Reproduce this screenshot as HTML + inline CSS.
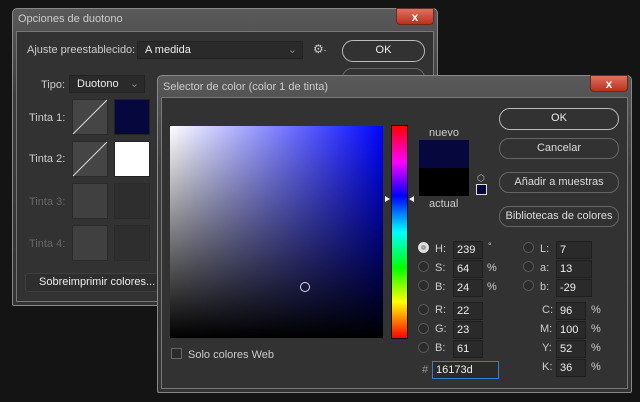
<!DOCTYPE html>
<html><head><meta charset="utf-8"><style>
*{box-sizing:border-box;margin:0;padding:0}
body{width:640px;height:402px;background:#141414;position:relative;overflow:hidden;font-family:"Liberation Sans",sans-serif;font-size:11px;color:#ddd}
.a{position:absolute}
.frame{background:linear-gradient(180deg,#5a5a5a,#3c3c3c 30%,#333);border:1px solid #888;border-radius:5px 5px 2px 2px}
.inner{background:#323232;border:1px solid #777}
.close{background:linear-gradient(#e07060,#b8321f);border:1px solid #6a2a20;border-radius:0 0 4px 4px;color:#fff;text-align:center;font-weight:bold;font-size:12px;line-height:16px}
.btn{border:1.5px solid #bbb;border-radius:11px;text-align:center;color:#eee;line-height:18px}
.btn2{border:1px solid #666;border-radius:10px;text-align:center;color:#ddd;line-height:18px}
.sel{background:#2a2a2a;border:1px solid #222;color:#eee;padding-left:7px;line-height:16px}
.sw{background:#454545;border:1px solid #2a2a2a}
.inp{background:#2a2a2a;border:1px solid #1e1e1e;color:#eee;padding-left:3px;line-height:16px;height:18px}
.rad{width:11px;height:11px;border-radius:50%;border:1px solid #555;background:#2b2b2b}
.lbl{color:#ccc}
.dim{color:#666}
</style></head><body>
<!-- dialog 1 -->
<div class="a frame" style="left:12px;top:8px;width:426px;height:298px"></div>
<div class="a" style="left:18px;top:13px;color:#ccc;font-size:11px">Opciones de duotono</div>
<div class="a close" style="left:396px;top:8px;width:38px;height:17px">x</div>
<div class="a inner" style="left:16px;top:31px;width:418px;height:271px"></div>
<div class="a lbl" style="left:27px;top:44px">Ajuste preestablecido:</div>
<div class="a sel" style="left:137px;top:41px;width:166px;height:18px">A medida<span style="position:absolute;right:5px;color:#888">⌄</span></div>
<div class="a" style="left:313px;top:42px;color:#ccc;font-size:12px">⚙<span style="font-size:8px">-</span></div>
<div class="a btn" style="left:342px;top:40px;width:83px;height:22px">OK</div>
<div class="a btn2" style="left:342px;top:68px;width:83px;height:20px"></div>
<div class="a lbl" style="left:41px;top:79px">Tipo:</div>
<div class="a sel" style="left:69px;top:75px;width:76px;height:18px">Duotono<span style="position:absolute;right:5px;color:#888">⌄</span></div>
<div class="a lbl" style="left:29px;top:112px">Tinta 1:</div>
<div class="a lbl" style="left:29px;top:153px">Tinta 2:</div>
<div class="a dim" style="left:29px;top:196px">Tinta 3:</div>
<div class="a dim" style="left:29px;top:238px">Tinta 4:</div>
<svg class="a" style="left:72px;top:99px" width="36" height="36"><rect x="0.5" y="0.5" width="35" height="35" fill="#454545" stroke="#2a2a2a"/><line x1="1" y1="35" x2="35" y2="1" stroke="#ddd"/></svg>
<svg class="a" style="left:72px;top:141px" width="36" height="36"><rect x="0.5" y="0.5" width="35" height="35" fill="#454545" stroke="#2a2a2a"/><line x1="1" y1="35" x2="35" y2="1" stroke="#ddd"/></svg>
<div class="a" style="left:114px;top:99px;width:36px;height:36px;background:#06073d;border:1px solid #222"></div>
<div class="a" style="left:114px;top:141px;width:36px;height:36px;background:#fff;border:1px solid #222"></div>
<div class="a sw" style="left:72px;top:183px;width:36px;height:36px;background:#404040"></div>
<div class="a sw" style="left:114px;top:183px;width:36px;height:36px;background:#2e2e2e"></div>
<div class="a sw" style="left:72px;top:225px;width:36px;height:36px;background:#404040"></div>
<div class="a sw" style="left:114px;top:225px;width:36px;height:36px;background:#2e2e2e"></div>
<div class="a" style="left:25px;top:273px;width:135px;height:19px;border:1px solid #3e3e3e;border-radius:3px;background:#2e2e2e"></div>
<div class="a" style="left:39px;top:276px;color:#eee">Sobreimprimir colores...</div>

<!-- dialog 2 -->
<div class="a frame" style="left:157px;top:75px;width:475px;height:318px"></div>
<div class="a" style="left:163px;top:81px;color:#ccc">Selector de color (color 1 de tinta)</div>
<div class="a close" style="left:590px;top:75px;width:38px;height:17px">x</div>
<div class="a inner" style="left:161px;top:97px;width:467px;height:292px"></div>
<div class="a" style="left:170px;top:126px;width:213px;height:212px;background:linear-gradient(to top,#000,rgba(0,0,0,0)),linear-gradient(to right,#fff,#0004ff)"></div>
<div class="a" style="left:300px;top:282px;width:10px;height:10px;border-radius:50%;border:1px solid #ddd"></div>
<div class="a" style="left:391px;top:125px;width:17px;height:214px;border:1px solid #111;background:linear-gradient(to bottom,#f00,#f0f 17%,#00f 33%,#0ff 50%,#0f0 67%,#ff0 83%,#f00)"></div>
<div class="a" style="left:385px;top:196px;width:0;height:0;border-top:3px solid transparent;border-bottom:3px solid transparent;border-left:5px solid #eee"></div>
<div class="a" style="left:409px;top:196px;width:0;height:0;border-top:3px solid transparent;border-bottom:3px solid transparent;border-right:5px solid #eee"></div>
<div class="a lbl" style="left:429px;top:127px">nuevo</div>
<div class="a" style="left:419px;top:140px;width:50px;height:28px;background:#06073d"></div>
<div class="a" style="left:419px;top:168px;width:50px;height:28px;background:#000"></div>
<div class="a lbl" style="left:429px;top:198px">actual</div>
<div class="a" style="left:477px;top:173px;color:#bbb;font-size:9px">⬡</div>
<div class="a" style="left:476px;top:184px;width:11px;height:11px;border:1.5px solid #ddd;background:#06073d"></div>
<div class="a btn" style="left:499px;top:108px;width:120px;height:22px">OK</div>
<div class="a btn2" style="left:499px;top:138px;width:120px;height:21px">Cancelar</div>
<div class="a btn2" style="left:499px;top:172px;width:120px;height:21px">Añadir a muestras</div>
<div class="a btn2" style="left:499px;top:206px;width:120px;height:21px">Bibliotecas de colores</div>
<div class="a" style="left:171px;top:348px;width:11px;height:11px;border:1px solid #666;background:#2b2b2b"></div>
<div class="a lbl" style="left:188px;top:349px">Solo colores Web</div>

<!-- fields -->
<div class="a" style="left:418px;top:242px;width:11px;height:11px;border-radius:50%;background:#ddd;border:3px solid #ddd;box-shadow:inset 0 0 0 2px #999"></div>
<div class="a rad" style="left:418px;top:261px"></div>
<div class="a rad" style="left:418px;top:280px"></div>
<div class="a rad" style="left:418px;top:304px"></div>
<div class="a rad" style="left:418px;top:323px"></div>
<div class="a rad" style="left:418px;top:342px"></div>
<div class="a lbl" style="left:435px;top:243px">H:</div>
<div class="a lbl" style="left:435px;top:262px">S:</div>
<div class="a lbl" style="left:435px;top:281px">B:</div>
<div class="a lbl" style="left:435px;top:304px">R:</div>
<div class="a lbl" style="left:435px;top:323px">G:</div>
<div class="a lbl" style="left:435px;top:342px">B:</div>
<div class="a inp" style="left:453px;top:241px;width:30px">239</div>
<div class="a inp" style="left:453px;top:260px;width:30px">64</div>
<div class="a inp" style="left:453px;top:279px;width:30px">24</div>
<div class="a inp" style="left:453px;top:302px;width:30px">22</div>
<div class="a inp" style="left:453px;top:321px;width:30px">23</div>
<div class="a inp" style="left:453px;top:340px;width:30px">61</div>
<div class="a lbl" style="left:488px;top:241px;font-size:9px">°</div>
<div class="a lbl" style="left:487px;top:262px">%</div>
<div class="a lbl" style="left:487px;top:281px">%</div>
<div class="a dim" style="left:422px;top:364px;color:#999">#</div>
<div class="a inp" style="left:432px;top:361px;width:67px;height:18px;border:1px solid #3a7bd5">16173d</div>
<div class="a rad" style="left:523px;top:242px"></div>
<div class="a rad" style="left:523px;top:261px"></div>
<div class="a rad" style="left:523px;top:280px"></div>
<div class="a lbl" style="left:540px;top:243px">L:</div>
<div class="a lbl" style="left:540px;top:262px">a:</div>
<div class="a lbl" style="left:540px;top:281px">b:</div>
<div class="a inp" style="left:556px;top:241px;width:36px">7</div>
<div class="a inp" style="left:556px;top:260px;width:36px">13</div>
<div class="a inp" style="left:556px;top:279px;width:36px">-29</div>
<div class="a lbl" style="left:542px;top:304px">C:</div>
<div class="a lbl" style="left:540px;top:323px">M:</div>
<div class="a lbl" style="left:542px;top:342px">Y:</div>
<div class="a lbl" style="left:542px;top:361px">K:</div>
<div class="a inp" style="left:556px;top:302px;width:30px">96</div>
<div class="a inp" style="left:556px;top:321px;width:30px">100</div>
<div class="a inp" style="left:556px;top:340px;width:30px">52</div>
<div class="a inp" style="left:556px;top:359px;width:30px">36</div>
<div class="a lbl" style="left:591px;top:304px">%</div>
<div class="a lbl" style="left:591px;top:323px">%</div>
<div class="a lbl" style="left:591px;top:342px">%</div>
<div class="a lbl" style="left:591px;top:361px">%</div>
</body></html>
